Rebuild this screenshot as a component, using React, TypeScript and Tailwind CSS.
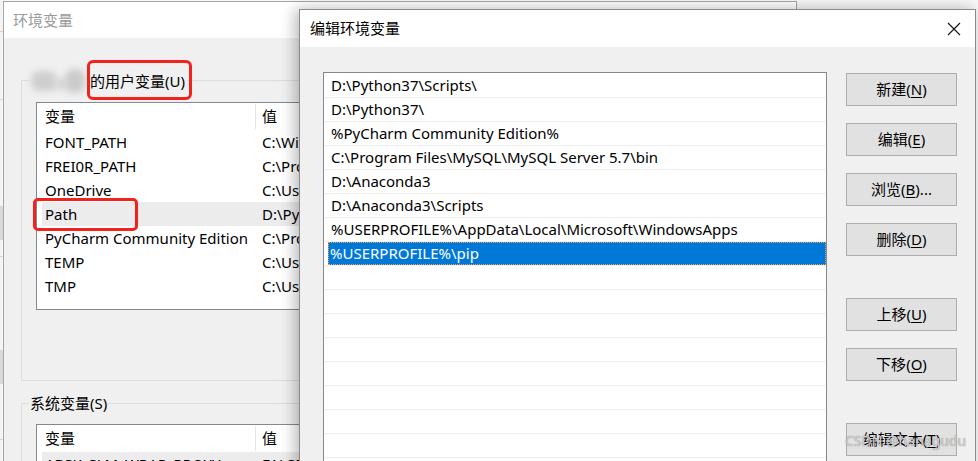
import React from "react";

const F = "font-['Noto_Sans','Noto_Sans_CJK_SC',sans-serif]";

const userVars: [string, string][] = [
  ["FONT_PATH", "C:\\Windows\\Fonts"],
  ["FREI0R_PATH", "C:\\Program Files\\frei0r"],
  ["OneDrive", "C:\\Users\\OneDrive"],
  ["Path", "D:\\Python37\\Scripts\\"],
  ["PyCharm Community Edition", "C:\\Program Files\\JetBrains"],
  ["TEMP", "C:\\Users\\AppData\\Local\\Temp"],
  ["TMP", "C:\\Users\\AppData\\Local\\Temp"],
];

const paths = [
  "D:\\Python37\\Scripts\\",
  "D:\\Python37\\",
  "%PyCharm Community Edition%",
  "C:\\Program Files\\MySQL\\MySQL Server 5.7\\bin",
  "D:\\Anaconda3",
  "D:\\Anaconda3\\Scripts",
  "%USERPROFILE%\\AppData\\Local\\Microsoft\\WindowsApps",
  "%USERPROFILE%\\pip",
  "",
  "",
  "",
  "",
  "",
  "",
  "",
  "",
];

function Btn({ pre, k, post = ")", mt }: { pre: string; k: string; post?: string; mt: string }) {
  return (
    <div
      className={`${mt} shrink-0 h-[33px] w-[111px] border border-[#adadad] bg-[#e1e1e1] flex items-center justify-center text-[15px] text-black`}
    >
      <span>
        {pre}(<span className="underline underline-offset-2">{k}</span>
        {post}
      </span>
    </div>
  );
}

function VarRow({ name, value, sel }: { name: string; value: string; sel?: boolean }) {
  return (
    <div className={`mx-[5px] h-[24px] flex items-center whitespace-nowrap ${sel ? "bg-[#ececec]" : ""}`}>
      <div className="w-[217px] pl-[3px] overflow-hidden">{name}</div>
      <div className="pl-[3px]">{value}</div>
    </div>
  );
}

function ListHeader() {
  return (
    <div className="h-[27px] flex items-center whitespace-nowrap pl-[8px]">
      <div className="w-[210px]">变量</div>
      <div className="w-px h-[25px] bg-[#e5e5e5]" />
      <div className="pl-[6px]">值</div>
    </div>
  );
}

export default function App() {
  return (
    <div className={`${F} relative w-[978px] h-[461px] overflow-hidden bg-[#f7f7f7] text-[15px] text-black`}>
      {/* desktop background strip */}
      <div className="absolute left-0 top-0 w-[3px] h-full bg-[#f4f4f4]">
        <div className="h-[32px] border-b border-[#d6d6d6]" />
        <div className="h-[68px] border-b border-[#d6d6d6]" />
        <div className="h-[106px]" />
        <div className="h-[34px] bg-[#d9d9d9]" />
        <div className="h-[17px] border-b border-[#d6d6d6]" />
        <div className="h-[93px]" />
        <div className="h-[34px] bg-[#d9d9d9]" />
        <div className="h-[56px] border-b border-[#d6d6d6]" />
      </div>

      {/* back window: 环境变量 */}
      <div className="absolute left-[3px] top-[1px] w-[794px] h-[480px] border border-[#a6a6a6] bg-[#f0f0f0] flex flex-col">
        <div className="shrink-0 h-[36px] bg-white flex items-center pl-[9px] text-[#9a9a9a]">环境变量</div>
        <div className="shrink-0 flex flex-col pl-[17px]">
          {/* user vars group */}
          <div className="shrink-0 relative mt-[42px] h-[301px] w-[760px] border border-[#dcdcdc]">
            <div className="absolute left-[7px] -top-[13px] h-[26px] flex items-center bg-[#f0f0f0] pl-[2px] pr-[2px]">
              <div className="w-[56px] h-[26px] flex items-center -space-x-[3px] mr-[3px]">
                <div className="w-[26px] h-[20px] rounded-[8px] bg-[#cfcfcf] blur-[3px]" />
                <div className="w-[14px] h-[12px] mt-[6px] rounded-full bg-[#d6d6d6] blur-[3px]" />
                <div className="w-[20px] h-[24px] rounded-[9px] bg-[#cbcbcb] blur-[3px]" />
              </div>
              <span>的用户变量(U)</span>
            </div>
            <div className="ml-[14px] mt-[21px] w-[720px] h-[208px] border border-[#828790] bg-white">
              <ListHeader />
              {userVars.map(([n, v]) => (
                <VarRow key={n} name={n} value={v} sel={n === "Path"} />
              ))}
            </div>
          </div>
          {/* system vars group */}
          <div className="shrink-0 relative mt-[22px] h-[200px] w-[760px] border border-[#dcdcdc]">
            <div className="absolute left-[7px] -top-[13px] h-[24px] flex items-center bg-[#f0f0f0] px-[1px]">
              系统变量(S)
            </div>
            <div className="ml-[14px] mt-[20px] w-[720px] h-[180px] border border-[#828790] bg-white">
              <ListHeader />
              <VarRow name="ABSK_SLM_WRAP_PROXY" value="FALSE" sel />
            </div>
          </div>
        </div>
      </div>

      {/* red highlight boxes (annotation) */}
      <div className="absolute left-[87px] top-[60px] w-[105px] h-[40px] border-[3px] border-[#f2231d] rounded-[6px]" />
      <div className="absolute left-[33px] top-[198px] w-[105px] h-[33px] border-[3px] border-[#f2231d] rounded-[5px]" />

      {/* front dialog: 编辑环境变量 */}
      <div className="absolute left-[299px] top-[9px] w-[677px] h-[470px] border border-[#8a8a8a] bg-[#f0f0f0] shadow-[-4px_0_14px_rgba(0,0,0,0.28)] flex flex-col">
        <div className="shrink-0 h-[37px] bg-white flex items-center justify-between pl-[10px] pr-[13px]">
          <span>编辑环境变量</span>
          <svg width="14" height="14" viewBox="0 0 14 14" className="mr-[1px]">
            <path d="M1 1 L13 13 M13 1 L1 13" stroke="#111" strokeWidth="1.1" fill="none" />
          </svg>
        </div>
        <div className="shrink-0 flex pl-[23px] pt-[25px]">
          <div className="shrink-0 w-[504px] h-[400px] border border-[#828790] bg-white pt-px">
            {paths.map((p, i) =>
              i === 7 ? (
                <div key={i} className="h-[24px] border-b border-[#efefef] flex">
                  <div className="flex-1 ml-[4px] pl-[2px] bg-[#0078d7] text-white outline-1 outline-dotted outline-[#f4a052] -outline-offset-1 flex items-center whitespace-nowrap">
                    {p}
                  </div>
                </div>
              ) : (
                <div key={i} className="h-[24px] border-b border-[#efefef] flex items-center pl-[7px] whitespace-nowrap">
                  {p}
                </div>
              )
            )}
          </div>
          <div className="ml-[19px] pt-px flex flex-col">
            <Btn pre="新建" k="N" mt="mt-0" />
            <Btn pre="编辑" k="E" mt="mt-[17px]" />
            <Btn pre="浏览" k="B" post=")..." mt="mt-[17px]" />
            <Btn pre="删除" k="D" mt="mt-[17px]" />
            <Btn pre="上移" k="U" mt="mt-[42px]" />
            <Btn pre="下移" k="O" mt="mt-[17px]" />
            <Btn pre="编辑文本" k="T" mt="mt-[42px]" />
          </div>
        </div>
      </div>

      {/* watermark */}
      <div className="absolute left-[845px] top-[430px] text-[14px] text-[#d0d0d0] [text-shadow:0_0_1px_rgba(70,70,70,0.7)] whitespace-nowrap">
        CSDN @hanagudu
      </div>
    </div>
  );
}
